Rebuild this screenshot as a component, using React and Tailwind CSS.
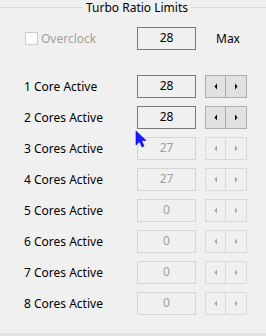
const rows = [
  { label: '1 Core Active', value: 28, enabled: true },
  { label: '2 Cores Active', value: 28, enabled: true },
  { label: '3 Cores Active', value: 27, enabled: false },
  { label: '4 Cores Active', value: 27, enabled: false },
  { label: '5 Cores Active', value: 0, enabled: false },
  { label: '6 Cores Active', value: 0, enabled: false },
  { label: '7 Cores Active', value: 0, enabled: false },
  { label: '8 Cores Active', value: 0, enabled: false },
]

function ValueBox({ value, enabled }) {
  return (
    <div
      className={`w-[59px] h-[23px] flex items-center justify-center border ${
        enabled ? 'border-[#7a7a7a] text-[#000]' : 'border-[#d4d4d4] text-[#a0a0a0]'
      } bg-[#f0f0f0]`}
    >
      <span className="-mt-[2px]">{value}</span>
    </div>
  )
}

function Arrow({ dir, enabled }) {
  const fill = enabled ? '#000' : '#a6a6a6'
  return (
    <svg width="4" height="7" viewBox="0 0 4 7">
      {dir === 'left' ? <path d="M3 0.5 L0.5 3.5 L3 6.5 Z" fill={fill} /> : <path d="M1 0.5 L3.5 3.5 L1 6.5 Z" fill={fill} />}
    </svg>
  )
}

function Spin({ enabled }) {
  const cls = enabled ? 'border-[#adadad] bg-[#e1e1e1]' : 'border-[#d9d9d9] bg-[#f0f0f0]'
  return (
    <div className="flex h-[23px]">
      <div className={`w-[21px] h-full border flex items-center justify-center ${cls}`}>
        <Arrow dir="left" enabled={enabled} />
      </div>
      <div className={`w-[21px] h-full border border-l-0 flex items-center justify-center ${cls}`}>
        <Arrow dir="right" enabled={enabled} />
      </div>
    </div>
  )
}

export default function App() {
  return (
    <div className="relative w-[266px] h-[336px] overflow-hidden bg-[#f0f0f0] text-[12px] text-black" style={{ fontFamily: '"Noto Sans", sans-serif' }}>
      {/* group box header */}
      <div className="flex items-center h-[15px]">
        <div className="w-[83px] h-px bg-[#dcdcdc]" />
        <span className="px-[3px] leading-[15px]">Turbo Ratio Limits</span>
        <div className="flex-1 h-px bg-[#dcdcdc]" />
      </div>

      <div className="flex items-center mt-[12px] h-[23px]">
        <div className="w-[137px] pl-[25px] flex items-center">
          <div className="w-[13px] h-[13px] border border-[#cccccc] bg-[#fcfcfc]" />
          <span className="ml-[3px] text-[#a0a0a0]">Overclock</span>
        </div>
        <ValueBox value={28} enabled />
        <span className="ml-[20px]">Max</span>
      </div>

      <div className="flex flex-col gap-[8px] mt-[25px]">
        {rows.map(r => (
          <div key={r.label} className="flex items-center h-[23px]">
            <span className="w-[137px] pl-[24px]">{r.label}</span>
            <ValueBox value={r.value} enabled={r.enabled} />
            <div className="ml-[9px]">
              <Spin enabled={r.enabled} />
            </div>
          </div>
        ))}
      </div>

      <div className="absolute left-0 right-0 bottom-0 h-[3px] bg-[#e3e3e3]" />

      {/* mouse cursor */}
      <svg className="absolute left-[135px] top-[130px]" width="12" height="19" viewBox="0 0 12 19">
        <path d="M1 1 L1 15 L4.5 11.5 L7 17 L9 16 L6.5 10.5 L11 10.5 Z" fill="#1a1aff" stroke="#0000c8" strokeWidth="0.6" />
      </svg>
    </div>
  )
}
